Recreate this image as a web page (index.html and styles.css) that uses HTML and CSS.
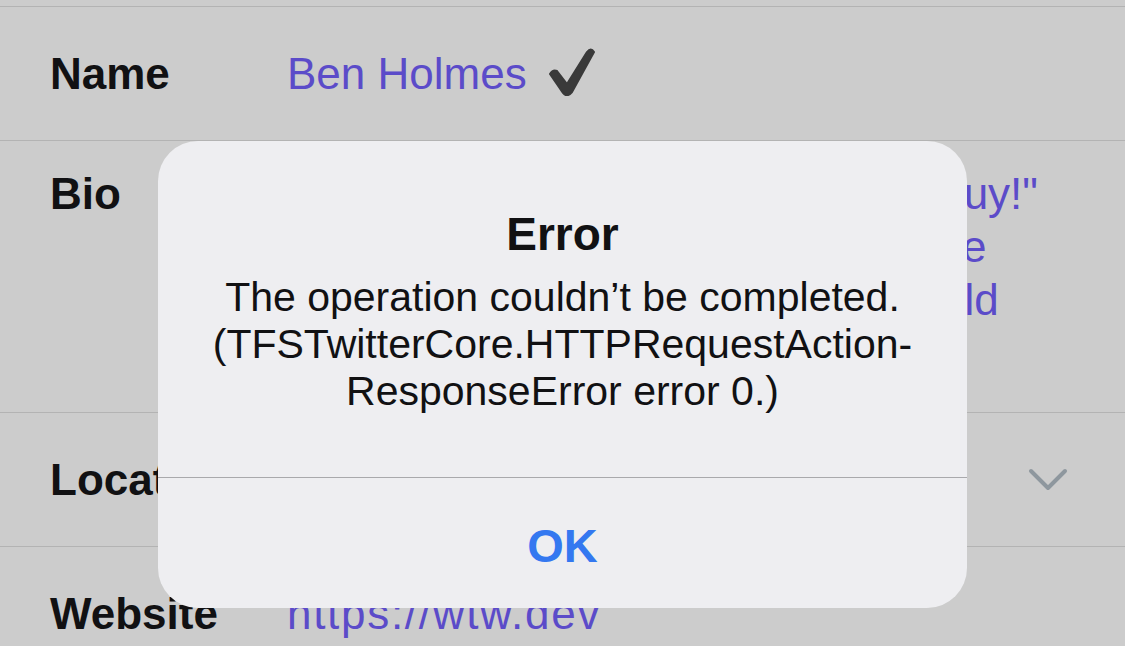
FILE: index.html
```html
<!DOCTYPE html>
<html lang="en">

<head>
  <meta charset="UTF-8">
  <meta name="viewport" content="width=device-width, initial-scale=1.0">
  <title>Edit profile</title>
  <link rel="stylesheet" href="styles.css">
</head>

<body>
  <div class="screen">
    <ul class="form">
      <li class="row">
        <span class="label">Name</span>
        <span class="value">Ben Holmes <svg class="check" width="48" height="48" viewBox="0 0 48 48">
            <path d="M3,26 Q6,21 10,23 L20,36 L40,4 Q44,-1 47,4 L25,44 Q20,50 16,45 Z" fill="#3a3a3a" stroke="#3a3a3a" stroke-width="2" stroke-linejoin="round" />
          </svg></span>
      </li>
      <li class="row row-bio">
        <span class="label">Bio</span>
        <span class="value">DX @ Astro "whiteboard the web guy!"<br>Sharing what I learn with the people<br>for web developers around the world</span>
      </li>
      <li class="row">
        <span class="label">Location</span>
        <span class="value"></span>
        <svg class="chevron" width="40" height="24" viewBox="0 0 40 24">
          <polyline points="3,3 20,20 37,3" fill="none" stroke="#8e979e" stroke-width="4" stroke-linecap="round" stroke-linejoin="round" />
        </svg>
      </li>
      <li class="row">
        <span class="label">Website</span>
        <span class="value link">https://wtw.dev</span>
      </li>
    </ul>

    <div class="alert">
      <div class="alert-body">
        <h2 class="alert-title">Error</h2>
        <p class="alert-text">The operation couldn’t be completed.<br>(TFSTwitterCore.HTTPRequestAction-<br>ResponseError error 0.)</p>
      </div>
      <div class="alert-btn">OK</div>
    </div>
  </div>
</body>

</html>
```

FILE: styles.css
```css
body,
ul,
li,
h2,
p {
  margin: 0;
  padding: 0;
  box-sizing: border-box;
}
ul {
  list-style: none;
}
body {
  background-color: #cccccc;
  font-family: "Liberation Sans", Arial, sans-serif;
  overflow: hidden;
}
.screen {
  position: relative;
  width: 1125px;
  height: 646px;
  overflow: hidden;
}
.form {
  padding-top: 6px;
}
.row {
  display: grid;
  grid-template-columns: 237px 1fr auto;
  align-items: center;
  height: 134px;
  padding: 0 57px 0 50px;
  border-top: 1px solid #b3b3b3;
  font-size: 44px;
}
.row-bio {
  align-items: start;
  height: 272px;
  padding-top: 26px;
  line-height: 53px;
}
.label {
  font-weight: bold;
  color: #111113;
  white-space: nowrap;
}
.value {
  color: #5b4bc9;
  white-space: nowrap;
}
.link {
  letter-spacing: 1.7px;
}
.check {
  vertical-align: -7px;
  margin-left: 8px;
}
.chevron {
  display: block;
}
.alert {
  position: absolute;
  left: 158px;
  top: 141px;
  width: 809px;
  height: 467px;
  border-radius: 40px;
  background-color: #eeeef1;
  display: flex;
  flex-direction: column;
  overflow: hidden;
  color: #111113;
  text-align: center;
}
.alert-body {
  padding: 65px 20px 62px;
  border-bottom: 1px solid #a9a9ac;
}
.alert-title {
  font-size: 46px;
  line-height: 56px;
  font-weight: bold;
}
.alert-text {
  margin-top: 12px;
  font-size: 41px;
  line-height: 47px;
}
.alert-btn {
  flex: 1;
  display: flex;
  align-items: center;
  justify-content: center;
  padding-top: 5px;
  font-size: 47px;
  font-weight: bold;
  color: #3478f0;
}
```
